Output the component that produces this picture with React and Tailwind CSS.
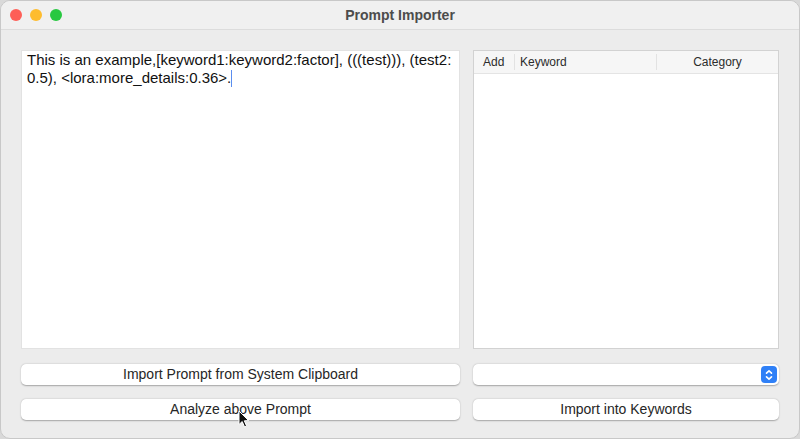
export default function App() {
  return (
    <div className="w-[800px] h-[439px] bg-[#d9d9d9] font-['Liberation_Sans',Arial,sans-serif]">
      <div className="relative w-full h-full rounded-[10px] overflow-hidden bg-[#ececec] border border-[#c8c8c8] flex flex-col">
        {/* title bar */}
        <div className="h-[29px] shrink-0 bg-[#f0f0f0] border-b border-[#dcdcdc] flex items-center relative">
          <div className="flex items-center gap-[8px] pl-[9px]">
            <span className="w-[12px] h-[12px] rounded-full bg-[#fe5f57]" />
            <span className="w-[12px] h-[12px] rounded-full bg-[#febc2e]" />
            <span className="w-[12px] h-[12px] rounded-full bg-[#28c840]" />
          </div>
          <div className="absolute inset-0 flex items-center justify-center text-[14px] font-bold text-[#4c4c4c]">
            Prompt Importer
          </div>
        </div>

        {/* body */}
        <div className="flex-1 flex flex-col px-[20px] pt-[20px] pb-[18px]">
          <div className="flex gap-[13px] h-[299px]">
            <div className="w-[439px] bg-white border border-[#e2e2e2] px-[5px] pt-0 text-[15px] leading-[18px] text-[#111]">
              This is an example,[keyword1:keyword2:factor], (((test))), (test2:
              <br />
              0.5), &lt;lora:more_details:0.36&gt;.
              <span className="inline-block w-[1px] h-[17px] bg-[#5b8def] align-[-4px]" />
            </div>
            <div className="flex-1 bg-white border border-[#d2d2d2] flex flex-col">
              <div className="h-[23px] bg-[#f6f6f6] border-b border-[#e4e4e4] flex items-center text-[12px] text-[#2c2c2c]">
                <div className="w-[41px] pl-[9px] h-[16px] flex items-center border-r border-[#e2e2e2]">Add</div>
                <div className="w-[142px] pl-[5px] h-[16px] flex items-center border-r border-[#e2e2e2]">Keyword</div>
                <div className="flex-1 text-center">Category</div>
              </div>
            </div>
          </div>

          <div className="flex gap-[13px] mt-[15px]">
            <button className="w-[439px] h-[21px] bg-white rounded-[5px] shadow-[0_0.5px_1.5px_rgba(0,0,0,0.3)] text-[14px] text-[#262626] flex items-center justify-center">
              Import Prompt from System Clipboard
            </button>
            <div className="flex-1 h-[21px] bg-white rounded-[5px] shadow-[0_0.5px_1.5px_rgba(0,0,0,0.3)] flex items-center justify-end pr-[2px]">
              <div className="w-[16px] h-[17px] rounded-[4px] bg-[#2f80f7] flex items-center justify-center">
                <svg width="8" height="12" viewBox="0 0 8 12" fill="none" stroke="white" strokeWidth="1.6" strokeLinecap="round" strokeLinejoin="round">
                  <path d="M1.5 4.2 L4 1.8 L6.5 4.2" />
                  <path d="M1.5 7.8 L4 10.2 L6.5 7.8" />
                </svg>
              </div>
            </div>
          </div>

          <div className="flex gap-[13px] mt-[14px]">
            <button className="relative w-[439px] h-[21px] bg-white rounded-[5px] shadow-[0_0.5px_1.5px_rgba(0,0,0,0.3)] text-[14px] text-[#262626] flex items-center justify-center">
              Analyze above Prompt
              <svg className="absolute left-[217px] top-[11px]" width="12" height="18" viewBox="0 0 12 18">
                <path d="M1 1 L1 14.5 L4.2 11.5 L6.6 17 L8.6 16.1 L6.3 10.8 L10.6 10.6 Z" fill="#111" stroke="white" strokeWidth="1" strokeLinejoin="round" />
              </svg>
            </button>
            <button className="flex-1 h-[21px] bg-white rounded-[5px] shadow-[0_0.5px_1.5px_rgba(0,0,0,0.3)] text-[14px] text-[#262626] flex items-center justify-center">
              Import into Keywords
            </button>
          </div>
        </div>
      </div>
    </div>
  );
}
